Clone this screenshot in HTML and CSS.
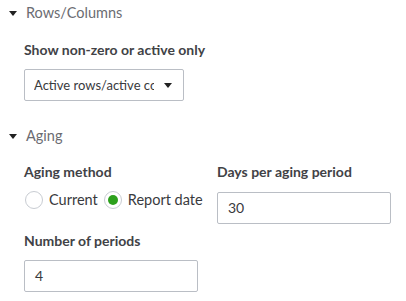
FILE: index.html
```html
<!DOCTYPE html>
<html>
<head>
    <title>Report settings</title>
    <link rel="stylesheet" href="styles.css">
</head>
<body>
    <div class="panel">
        <div class="section">
            <div class="section-header"><span class="caret"></span>Rows/Columns</div>
            <div class="section-body">
                <div class="label first">Show non-zero or active only</div>
                <div class="select">
                    <span class="select-text">Active rows/active co</span>
                    <span class="select-arrow"></span>
                </div>
            </div>
        </div>

        <div class="section aging">
            <div class="section-header"><span class="caret"></span>Aging</div>
            <div class="section-body">
                <div class="row">
                    <div class="col method">
                        <div class="label">Aging method</div>
                        <div class="radios">
                            <span class="radio"></span>
                            <span class="radio-label">Current</span>
                            <span class="radio checked"></span>
                            <span class="radio-label">Report date</span>
                        </div>
                    </div>
                    <div class="col">
                        <div class="label">Days per aging period</div>
                        <div class="input">30</div>
                    </div>
                </div>
                <div class="label periods">Number of periods</div>
                <div class="input">4</div>
            </div>
        </div>
    </div>
</body>
</html>
```

FILE: styles.css
```css
body {
    margin: 0;
    background-color: white;
    font-family: Lato, "Open Sans", sans-serif;
    font-size: 14px;
    line-height: 20px;
    color: #393a3d;
}

.panel {
    padding-top: 3px;
}

.section-header {
    display: flex;
    align-items: center;
    padding-left: 9px;
    font-size: 14.5px;
    color: #6b6c72;
}

.caret {
    width: 0;
    height: 0;
    margin-right: 9px;
    border-left: 4px solid transparent;
    border-right: 4px solid transparent;
    border-top: 5px solid #222;
}

.section-body {
    padding-left: 24px;
}

.label {
    font-weight: 700;
    font-size: 14px;
    color: #414246;
}

.label.first {
    margin-top: 17px;
}

.select {
    display: flex;
    align-items: center;
    box-sizing: border-box;
    width: 160px;
    height: 32px;
    margin-top: 9px;
    padding-left: 9px;
    border: 1px solid #babec5;
    border-radius: 2px;
}

.select-text {
    width: 120px;
    overflow: hidden;
    white-space: nowrap;
    font-size: 13px;
    color: #393a3d;
}

.select-arrow {
    width: 0;
    height: 0;
    margin-left: 10px;
    border-left: 4px solid transparent;
    border-right: 4px solid transparent;
    border-top: 5px solid #222;
}

.aging {
    margin-top: 25px;
}

.row {
    display: flex;
    margin-top: 16px;
}

.col.method {
    width: 193px;
}

.radios {
    display: flex;
    align-items: center;
    margin-top: 8px;
    font-size: 14.5px;
}

.radio {
    box-sizing: border-box;
    width: 18px;
    height: 18px;
    margin-left: 1px;
    border: 1px solid #c8ccd2;
    border-radius: 50%;
    display: flex;
    align-items: center;
    justify-content: center;
}

.radio.checked::after {
    content: "";
    width: 10px;
    height: 10px;
    border-radius: 50%;
    background-color: #2ca01c;
}

.radio-label {
    margin-left: 6px;
    margin-right: 5px;
}

.input {
    box-sizing: border-box;
    width: 174px;
    height: 32px;
    margin-top: 10px;
    padding-left: 10px;
    line-height: 30px;
    border: 1px solid #babec5;
    border-radius: 2px;
    font-size: 14px;
    color: #393a3d;
}

.label.periods {
    margin-top: 7px;
}

.label.periods + .input {
    margin-top: 9px;
}
```
